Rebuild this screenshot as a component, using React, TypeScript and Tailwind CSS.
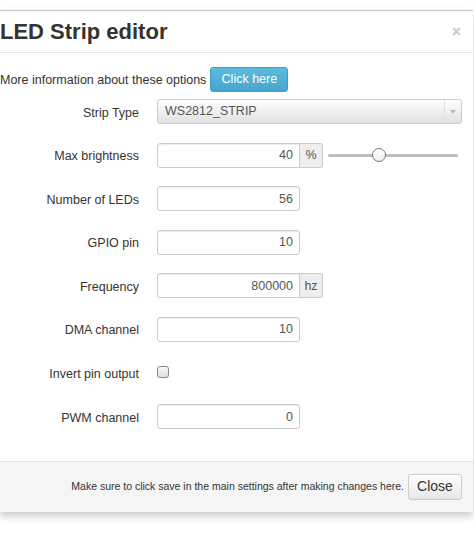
import React from "react";

function NumInput({ value, addon }: { value: string; addon?: string }) {
  return (
    <div className="flex h-[25px]">
      <div
        className={
          "h-[25px] w-[143px] border border-[#cccccc] bg-white flex items-center justify-end pr-[6px] pt-[1px] text-[12.5px] text-[#555555] shadow-[inset_0_1px_1px_rgba(0,0,0,0.075)] " +
          (addon ? "rounded-l-[3px]" : "rounded-[3px]")
        }
      >
        {value}
      </div>
      {addon && (
        <div className="h-[25px] w-[23px] border border-l-0 border-[#cccccc] bg-[#eeeeee] rounded-r-[3px] flex items-center justify-center pt-[1px] text-[12.5px] text-[#555555]">
          {addon}
        </div>
      )}
    </div>
  );
}

function Row({ label, children }: { label: string; children: React.ReactNode }) {
  return (
    <div className="flex items-center h-[25px]">
      <div className="w-[139px] text-right text-[12.5px] text-[#333333] shrink-0 pt-[3px]">{label}</div>
      <div className="ml-[18px] flex items-center">{children}</div>
    </div>
  );
}

export default function App() {
  return (
    <div className="w-[474px] h-[540px] bg-white relative overflow-hidden font-['Liberation_Sans',Arial,sans-serif]">
      <div className="mt-[10px] w-[473px] border-t border-[#c4c4c4] bg-white shadow-[0_4px_8px_rgba(0,0,0,0.22)]">
        <div className="h-[42px] border-b border-[#e5e5e5] flex items-center justify-between">
          <div className="text-[22px] font-bold text-[#333333] leading-none mt-[1px]">LED Strip editor</div>
          <div className="mr-[12px] text-[16px] text-[#c8c8c8] font-bold leading-none">×</div>
        </div>
        <div className="pt-[14px] pb-[32px]">
          <div className="flex items-center h-[25px]">
            <span className="text-[12.5px] text-[#333333] pt-[1px]">More information about these options</span>
            <div className="ml-[4px] h-[25px] w-[78px] rounded-[3px] bg-[linear-gradient(#5bbcdf,#45a5cc)] border border-[#3d9fc6] text-white text-[12.5px] flex items-center justify-center">
              Click here
            </div>
          </div>
          <div className="mt-[7px] flex flex-col gap-[18.57px]">
            <Row label="Strip Type">
              <div className="h-[25px] w-[305px] border border-[#cccccc] rounded-[3px] bg-[linear-gradient(#ffffff,#e0e0e0)] flex items-center">
                <div className="flex-1 pl-[7px] text-[12.5px] text-[#555555]">WS2812_STRIP</div>
                <div className="w-[17px] h-full border-l border-[#e0e0e0] flex items-center justify-center">
                  <div className="w-0 h-0 border-l-[3px] border-r-[3px] border-t-[4px] border-l-transparent border-r-transparent border-t-[#bbbbbb]" />
                </div>
              </div>
            </Row>
            <Row label="Max brightness">
              <NumInput value="40" addon="%" />
              <div className="ml-[5px] relative w-[130px] h-[14px] flex items-center">
                <div className="w-full h-[3px] rounded-full bg-[#bdbdbd]" />
                <div className="absolute left-[44px] top-0 w-[14px] h-[14px] rounded-full bg-[linear-gradient(#ffffff,#eeeeee)] border border-[#777777]" />
              </div>
            </Row>
            <Row label="Number of LEDs">
              <NumInput value="56" />
            </Row>
            <Row label="GPIO pin">
              <NumInput value="10" />
            </Row>
            <Row label="Frequency">
              <NumInput value="800000" addon="hz" />
            </Row>
            <Row label="DMA channel">
              <NumInput value="10" />
            </Row>
            <Row label="Invert pin output">
              <div className="w-[12px] h-[12px] -mt-[2px] rounded-[3px] border border-[#8a8a8a] bg-[linear-gradient(#f8f8f8,#dddddd)]" />
            </Row>
            <Row label="PWM channel">
              <NumInput value="0" />
            </Row>
          </div>
        </div>
        <div className="h-[51px] border-t border-[#e5e5e5] bg-[#f5f5f5] flex items-center justify-end pr-[11px]">
          <span className="text-[10.5px] text-[#333333]">Make sure to click save in the main settings after making changes here.</span>
          <div className="ml-[4px] h-[26px] w-[54px] rounded-[3px] border border-[#cccccc] bg-[linear-gradient(#ffffff,#e6e6e6)] flex items-center justify-center text-[14px] text-[#333333]">
            Close
          </div>
        </div>
      </div>
    </div>
  );
}
